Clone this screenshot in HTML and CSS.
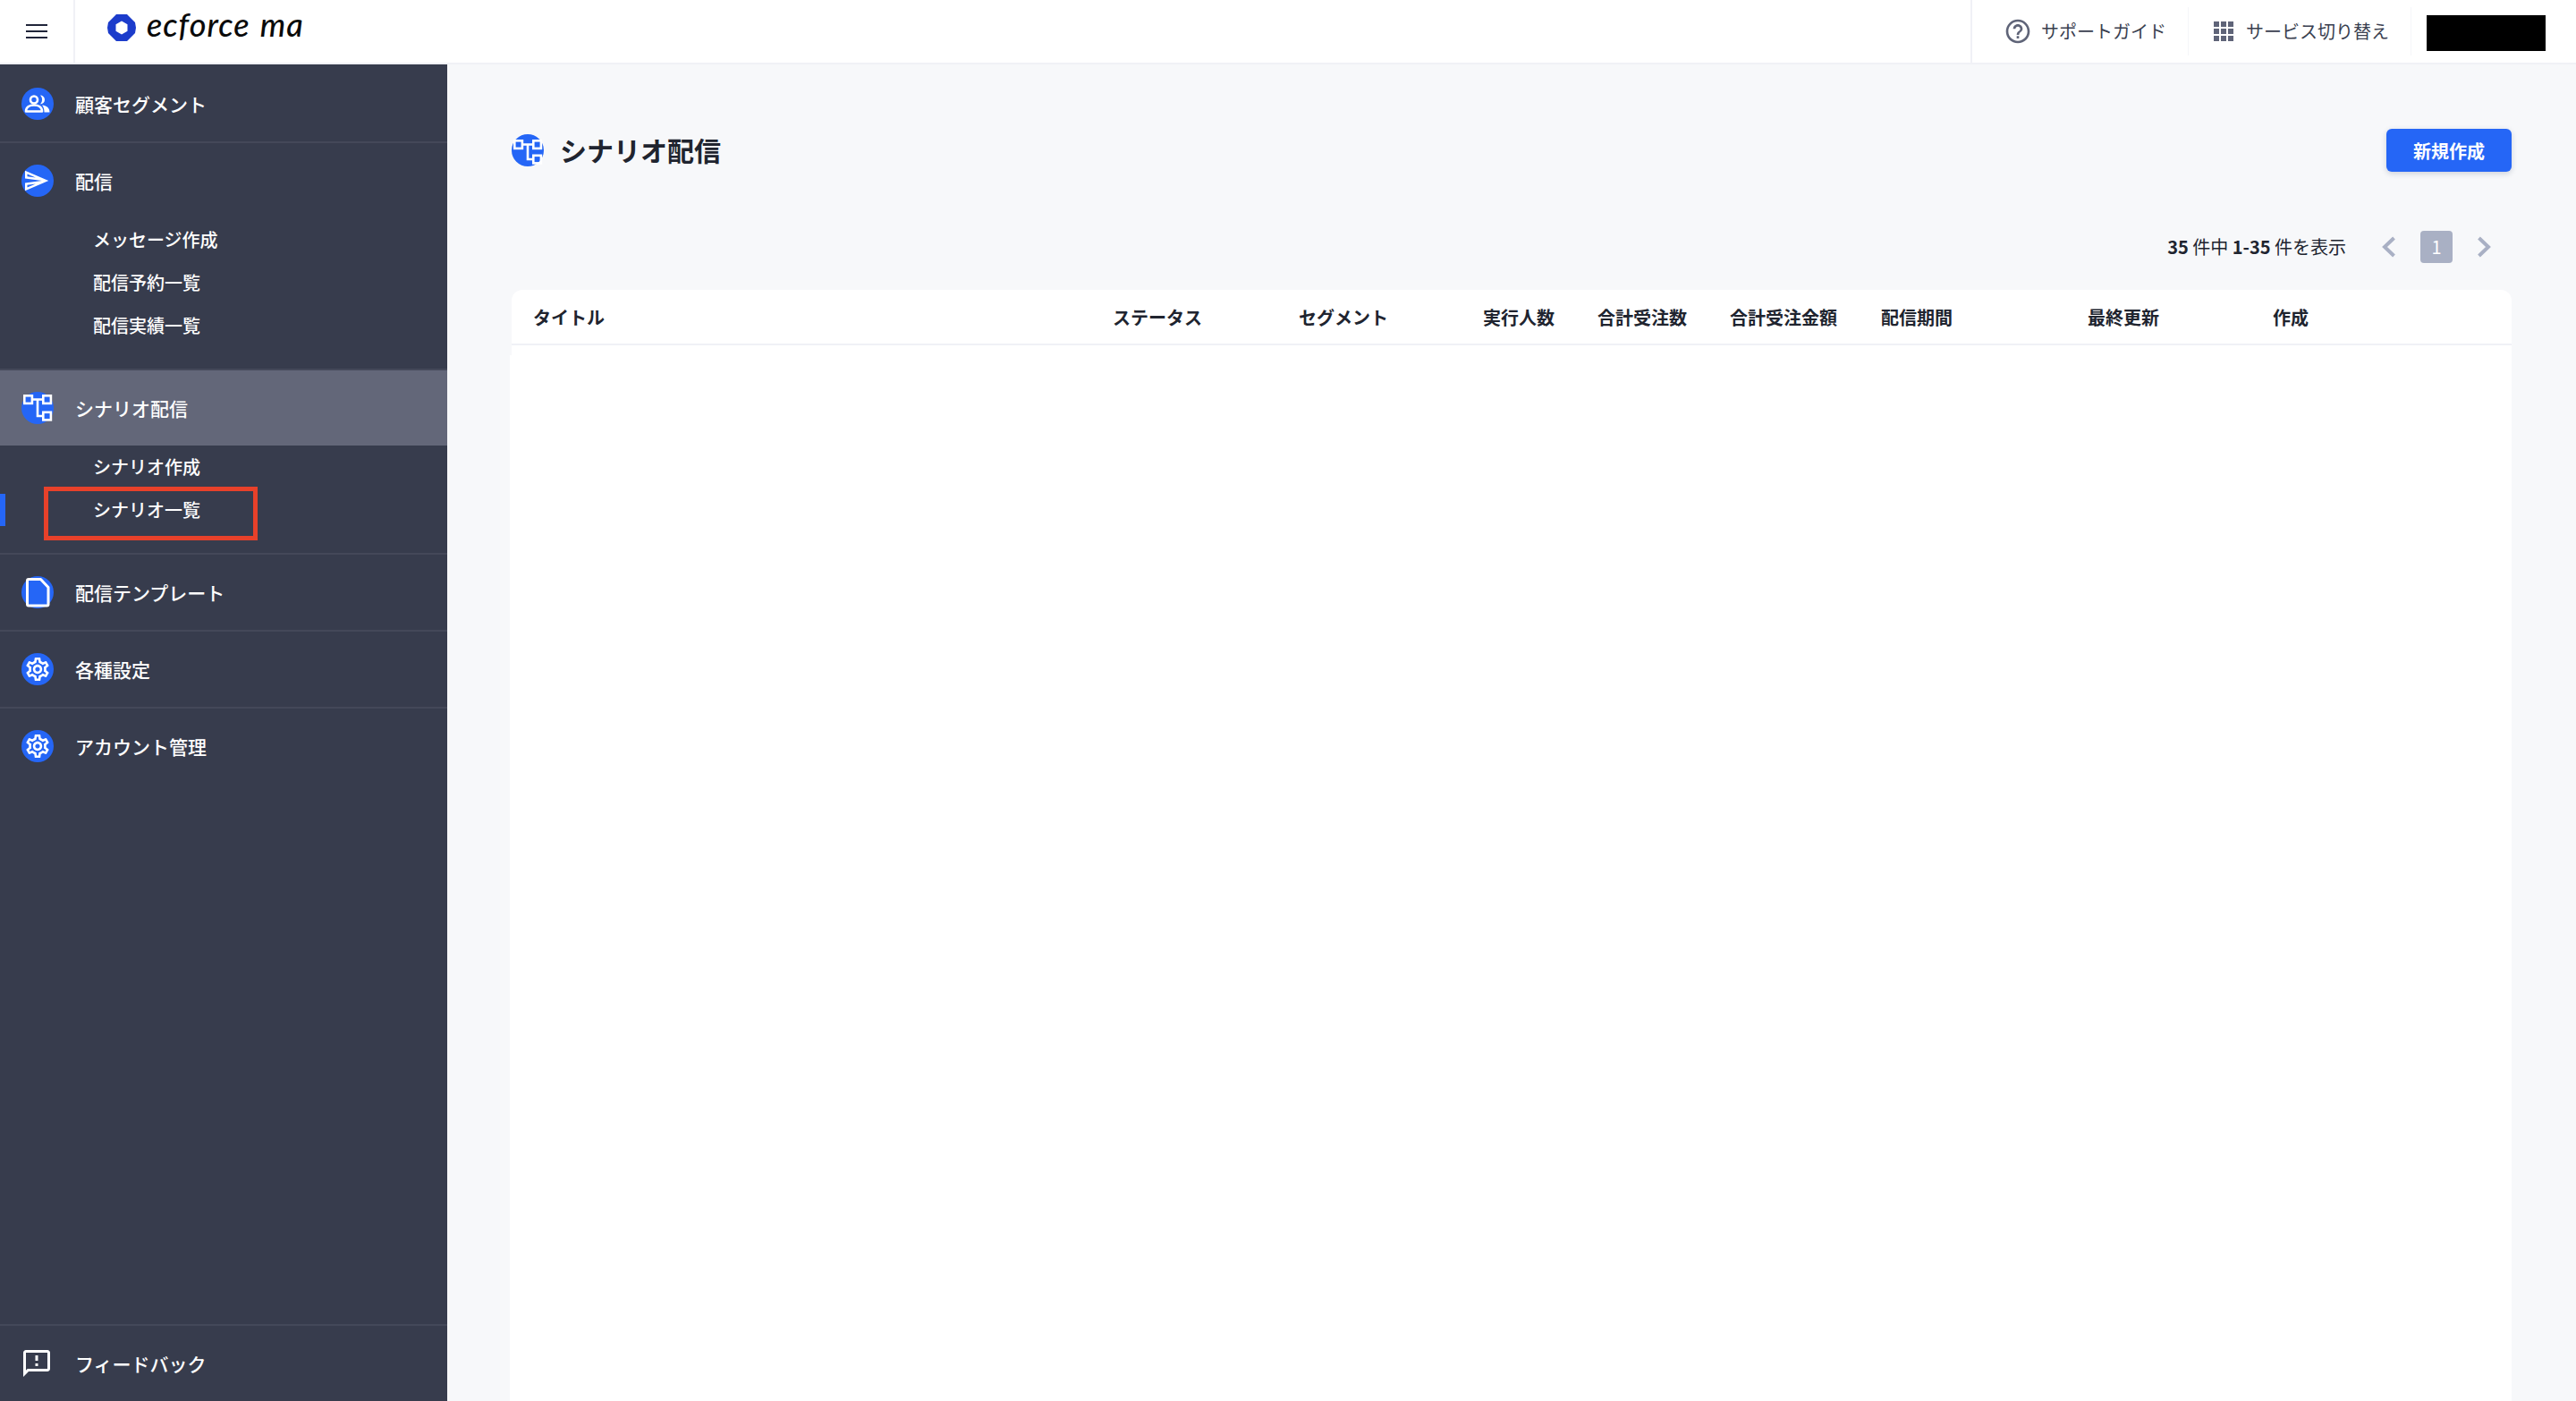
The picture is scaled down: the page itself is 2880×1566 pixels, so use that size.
FILE: index.html
```html
<!DOCTYPE html>
<html lang="ja">
<head>
<meta charset="utf-8">
<title>シナリオ配信</title>
<link rel="stylesheet" href="styles.css">
</head>
<body>
<header class="topbar">
  <div class="burger-cell"><span class="burger"><i></i><i></i><i></i></span></div>
  <div class="logo">
    <svg class="logo-mark" viewBox="0 0 32 32"><path d="M10 1 L22 1 L31 10 L32 16 L31 22 L22 31 L10 31 L1 22 L0 16 L1 10 Z M16 8.500 L9.500 12.200 L9.500 19.800 L16 23.500 L22.500 19.800 L22.500 12.200 Z" fill="#1c3ccb" fill-rule="evenodd"/></svg>
    <span class="logo-text">ecforce ma</span>
  </div>
  <div class="top-actions">
    <div class="top-link guide">
      <svg class="help-icon" viewBox="0 0 24 24"><path fill="#5f6478" d="M11 18h2v-2h-2v2zm1-16C6.480 2 2 6.480 2 12s4.480 10 10 10 10-4.480 10-10S17.520 2 12 2zm0 18c-4.410 0-8-3.590-8-8s3.590-8 8-8 8 3.590 8 8-3.590 8-8 8zm0-14c-2.210 0-4 1.790-4 4h2c0-1.100.9-2 2-2s2 .9 2 2c0 2-3 1.750-3 5h2c0-2.250 3-2.500 3-5 0-2.210-1.790-4-4-4z"/></svg>
      <span>サポートガイド</span>
    </div>
    <div class="top-link switch">
      <svg class="apps-icon" viewBox="0 0 22 22" fill="#5f6478"><rect x="0" y="0" width="6" height="6"/><rect x="8" y="0" width="6" height="6"/><rect x="16" y="0" width="6" height="6"/><rect x="0" y="8" width="6" height="6"/><rect x="8" y="8" width="6" height="6"/><rect x="16" y="8" width="6" height="6"/><rect x="0" y="16" width="6" height="6"/><rect x="8" y="16" width="6" height="6"/><rect x="16" y="16" width="6" height="6"/></svg>
      <span>サービス切り替え</span>
    </div>
    <div class="user-slot"><div class="redacted"></div></div>
  </div>
</header>

<div class="shell">
  <aside class="sidebar">
    <nav class="nav">
      <section class="nav-group first">
        <div class="nav-head">
          <svg class="nav-icon" viewBox="0 0 36 36"><circle cx="18" cy="18" r="18" fill="#2566f6"/><circle cx="14" cy="13.500" r="4" fill="none" stroke="#fff" stroke-width="2.600"/><path d="M21 8.500a5 5 0 0 1 0 10a7 7 0 0 0 0-10z" fill="#fff"/><path d="M5 26.500C5 21.500 9.500 19.500 14 19.500S23 21.500 23 26.500Z" fill="none" stroke="#fff" stroke-width="2.600" stroke-linejoin="round"/><path d="M23 19.500C28 20 31.500 22.500 31.500 27.500H25.500C25.500 24 24.800 21.500 23 19.500Z" fill="#fff"/></svg>
          <span>顧客セグメント</span>
        </div>
      </section>
      <section class="nav-group">
        <div class="nav-head">
          <svg class="nav-icon" viewBox="0 0 36 36"><circle cx="18" cy="18" r="18" fill="#2566f6"/><g transform="translate(1.500 3) scale(1.25)"><path fill="#fff" d="M4.010 6.030l7.510 3.220-7.520-1 .01-2.220zm7.500 8.720L4 17.970v-2.220l7.510-1zM2.010 3L2 10l15 2-15 2 .01 7L23 12 2.010 3z"/></g></svg>
          <span>配信</span>
        </div>
        <ul class="sub-list">
          <li>メッセージ作成</li>
          <li>配信予約一覧</li>
          <li>配信実績一覧</li>
        </ul>
      </section>
      <section class="nav-group">
        <div class="nav-head active">
          <svg class="nav-icon" viewBox="0 0 36 36"><circle cx="18" cy="18" r="18" fill="#2566f6"/><g fill="none" stroke="#fff" stroke-width="2.600"><rect x="3.300" y="4.300" width="8.600" height="8.600"/><rect x="24.300" y="4.300" width="8.600" height="8.600"/><rect x="24.300" y="22.800" width="8.600" height="8.600"/><path d="M12 8.500H24M18 8.500V27H24"/></g></svg>
          <span>シナリオ配信</span>
        </div>
        <ul class="sub-list">
          <li>シナリオ作成</li>
          <li class="current">シナリオ一覧<b class="current-bar"></b><b class="callout"></b></li>
        </ul>
      </section>
      <section class="nav-group">
        <div class="nav-head">
          <svg class="nav-icon" viewBox="0 0 36 36"><circle cx="18" cy="18" r="18" fill="#2566f6"/><path d="M8 3.500H21.500L30 12.500V31.500A1.500 1.500 0 0 1 28.500 33H8A1.500 1.500 0 0 1 6.500 31.500V5A1.500 1.500 0 0 1 8 3.500Z" fill="#2566f6" stroke="#fff" stroke-width="3" stroke-linejoin="round"/></svg>
          <span>配信テンプレート</span>
        </div>
      </section>
      <section class="nav-group">
        <div class="nav-head">
          <svg class="nav-icon" viewBox="0 0 36 36"><circle cx="18" cy="18" r="18" fill="#2566f6"/><g transform="translate(2.400 2.400) scale(1.3)"><path fill="#fff" d="M19.430 12.980c.04-.32.07-.64.07-.98 0-.34-.03-.66-.07-.98l2.110-1.650c.19-.15.24-.42.12-.64l-2-3.460c-.09-.16-.26-.25-.44-.25-.06 0-.12.01-.17.03l-2.490 1c-.52-.4-1.080-.73-1.690-.98l-.38-2.650C14.460 2.180 14.250 2 14 2h-4c-.25 0-.46.18-.49.42l-.38 2.650c-.61.25-1.170.59-1.690.98l-2.490-1c-.06-.02-.12-.03-.18-.03-.17 0-.34.09-.43.25l-2 3.460c-.13.22-.07.49.12.64l2.110 1.650c-.04.32-.07.65-.07.98 0 .33.03.66.07.98l-2.110 1.650c-.19.15-.24.42-.12.64l2 3.460c.09.16.26.25.44.25.06 0 .12-.01.17-.03l2.490-1c.52.4 1.080.73 1.690.98l.38 2.650c.03.24.24.42.49.42h4c.25 0 .46-.18.49-.42l.38-2.650c.61-.25 1.170-.59 1.690-.98l2.490 1c.06.02.12.03.18.03.17 0 .34-.09.43-.25l2-3.460c.12-.22.07-.49-.12-.64l-2.110-1.650zm-1.980-1.710c.04.31.05.52.05.73 0 .21-.02.43-.05.73l-.14 1.130.89.7 1.080.84-.7 1.210-1.270-.51-1.040-.42-.9.68c-.43.32-.84.56-1.250.73l-1.060.43-.16 1.130-.2 1.350h-1.400l-.19-1.350-.16-1.130-1.060-.43c-.43-.18-.83-.41-1.230-.71l-.91-.7-1.060.43-1.270.51-.7-1.210 1.080-.84.89-.7-.14-1.130c-.03-.31-.05-.54-.05-.74s.02-.43.05-.73l.14-1.130-.89-.7-1.080-.84.7-1.210 1.270.51 1.040.42.9-.68c.43-.32.84-.56 1.250-.73l1.060-.43.16-1.130.2-1.350h1.390l.19 1.350.16 1.130 1.060.43c.43.18.83.41 1.230.71l.91.7 1.060-.43 1.270-.51.7 1.210-1.070.85-.89.7.14 1.130zM12 8c-2.210 0-4 1.790-4 4s1.790 4 4 4 4-1.790 4-4-1.790-4-4-4zm0 6c-1.100 0-2-.9-2-2s.9-2 2-2 2 .9 2 2-.9 2-2 2z"/></g></svg>
          <span>各種設定</span>
        </div>
      </section>
      <section class="nav-group">
        <div class="nav-head">
          <svg class="nav-icon" viewBox="0 0 36 36"><circle cx="18" cy="18" r="18" fill="#2566f6"/><g transform="translate(2.400 2.400) scale(1.3)"><path fill="#fff" d="M19.430 12.980c.04-.32.07-.64.07-.98 0-.34-.03-.66-.07-.98l2.110-1.650c.19-.15.24-.42.12-.64l-2-3.460c-.09-.16-.26-.25-.44-.25-.06 0-.12.01-.17.03l-2.490 1c-.52-.4-1.080-.73-1.690-.98l-.38-2.650C14.460 2.180 14.250 2 14 2h-4c-.25 0-.46.18-.49.42l-.38 2.650c-.61.25-1.170.59-1.690.98l-2.490-1c-.06-.02-.12-.03-.18-.03-.17 0-.34.09-.43.25l-2 3.460c-.13.22-.07.49.12.64l2.110 1.650c-.04.32-.07.65-.07.98 0 .33.03.66.07.98l-2.110 1.650c-.19.15-.24.42-.12.64l2 3.460c.09.16.26.25.44.25.06 0 .12-.01.17-.03l2.490-1c.52.4 1.080.73 1.690.98l.38 2.650c.03.24.24.42.49.42h4c.25 0 .46-.18.49-.42l.38-2.650c.61-.25 1.170-.59 1.690-.98l2.490 1c.06.02.12.03.18.03.17 0 .34-.09.43-.25l2-3.460c.12-.22.07-.49-.12-.64l-2.110-1.650zm-1.980-1.710c.04.31.05.52.05.73 0 .21-.02.43-.05.73l-.14 1.130.89.7 1.080.84-.7 1.210-1.270-.51-1.040-.42-.9.68c-.43.32-.84.56-1.250.73l-1.060.43-.16 1.130-.2 1.350h-1.400l-.19-1.350-.16-1.130-1.060-.43c-.43-.18-.83-.41-1.230-.71l-.91-.7-1.060.43-1.270.51-.7-1.210 1.080-.84.89-.7-.14-1.130c-.03-.31-.05-.54-.05-.74s.02-.43.05-.73l.14-1.130-.89-.7-1.080-.84.7-1.210 1.270.51 1.040.42.9-.68c.43-.32.84-.56 1.250-.73l1.060-.43.16-1.130.2-1.350h1.390l.19 1.350.16 1.130 1.060.43c.43.18.83.41 1.230.71l.91.7 1.060-.43 1.270-.51.7 1.210-1.070.85-.89.7.14 1.130zM12 8c-2.210 0-4 1.790-4 4s1.790 4 4 4 4-1.790 4-4-1.790-4-4-4zm0 6c-1.100 0-2-.9-2-2s.9-2 2-2 2 .9 2 2-.9 2-2 2z"/></g></svg>
          <span>アカウント管理</span>
        </div>
      </section>
    </nav>
    <div class="nav-foot">
      <svg class="nav-icon" viewBox="0 0 24 24"><path fill="#fff" d="M20 2H4c-1.100 0-1.990.9-1.990 2L2 22l4-4h14c1.100 0 2-.9 2-2V4c0-1.100-.9-2-2-2zm0 14H5.170L4 17.170V4h16v12zm-9-4h2v2h-2zm0-6h2v4h-2z"/></svg>
      <span>フィードバック</span>
    </div>
  </aside>

  <main class="main">
    <div class="title-row">
      <div class="page-title">
        <svg class="nav-icon" viewBox="0 0 36 36"><circle cx="18" cy="18" r="18" fill="#2566f6"/><g fill="none" stroke="#fff" stroke-width="2.600"><rect x="3.300" y="7.300" width="8.600" height="8.600"/><rect x="24.300" y="7.300" width="8.600" height="8.600"/><rect x="24.300" y="23.800" width="8.600" height="8.600"/><path d="M12 11.500H24M18 11.500V28H24"/></g></svg>
        <h1>シナリオ配信</h1>
      </div>
      <button class="primary">新規作成</button>
    </div>
    <div class="pager">
      <span class="count"><b>35</b> 件中 <b>1-35</b> 件を表示</span>
      <svg class="chev prev" viewBox="0 0 16 24"><path d="M13.500 2L3 12l10.500 10" fill="none" stroke="#a9b0c4" stroke-width="4"/></svg>
      <span class="page-no">1</span>
      <svg class="chev next" viewBox="0 0 16 24"><path d="M2.500 2L13 12 2.500 22" fill="none" stroke="#a9b0c4" stroke-width="4"/></svg>
    </div>
    <div class="table-card">
      <div class="thead">
        <span>タイトル</span>
        <span>ステータス</span>
        <span>セグメント</span>
        <span>実行人数</span>
        <span>合計受注数</span>
        <span>合計受注金額</span>
        <span>配信期間</span>
        <span>最終更新</span>
        <span>作成</span>
      </div>
      <div class="tbody"></div>
    </div>
  </main>
</div>
</body>
</html>
```
FILE: styles.css
```css
* { box-sizing: border-box; }
html, body { height: 100%; }
body {
  margin: 0;
  height: 1566px;
  overflow: hidden;
  display: flex;
  flex-direction: column;
  background: #f7f8fa;
  color: #20242f;
  font-family: "Noto Sans CJK JP", "Noto Sans", sans-serif;
  font-size: 20px;
}

/* top bar */
.topbar {
  flex: 0 0 72px;
  display: flex;
  align-items: stretch;
  background: #fff;
  border-bottom: 2px solid #f0f1f6;
}
.burger-cell {
  flex: 0 0 84px;
  display: flex;
  align-items: center;
  padding-left: 29px;
  border-right: 2px solid #f0f1f6;
}
.burger {
  display: flex;
  flex-direction: column;
  gap: 5px;
  width: 24px;
}
.burger i { display: block; height: 2px; background: #20253a; }
.logo {
  display: flex;
  align-items: center;
  gap: 12px;
  padding: 0 0 8px 36px;
}
.logo-mark { width: 32px; height: 32px; }
.logo-text {
  font-family: Lato, "Noto Sans", sans-serif;
  font-style: italic;
  font-weight: 500;
  font-size: 36px;
  letter-spacing: 1px;
  word-spacing: 2px;
  color: #0a0a0a;
  line-height: 1;
  margin-top: -8px;
}
.top-actions { margin-left: auto; display: flex; align-items: stretch; }
.top-link {
  display: flex;
  align-items: center;
  color: #3a3f50;
  font-size: 20px;
  line-height: 1;
  position: relative;
}
.guide {
  width: 243px;
  padding-left: 35px;
  gap: 10px;
  border-left: 2px solid #f0f1f6;
}
.switch {
  width: 249px;
  padding-left: 29px;
  gap: 14px;
}
.switch::before, .user-slot::before {
  content: "";
  position: absolute;
  left: 0;
  top: 8px;
  bottom: 8px;
  width: 1px;
  background: #f5f6f9;
}
.help-icon { width: 32px; height: 32px; }
.apps-icon { width: 22px; height: 22px; }
.user-slot {
  position: relative;
  width: 185px;
  padding: 17px 34px 0 18px;
}
.redacted { height: 40px; background: #000; }

/* layout */
.shell { flex: 1; display: flex; min-height: 0; }
.sidebar {
  flex: 0 0 500px;
  display: flex;
  flex-direction: column;
  background: #373c4d;
  color: #fff;
}
.nav { flex: 1; display: flex; flex-direction: column; }
.nav-group { border-bottom: 2px solid #444859; }
.nav-group:last-child { border-bottom: 0; }
.nav-group.first { padding-top: 2px; }
.nav-head {
  height: 84px;
  display: flex;
  align-items: center;
  gap: 24px;
  padding-left: 24px;
  font-size: 21px;
  font-weight: 500;
  line-height: 1;
}
.nav-head.active { background: #636779; }
.nav-icon { width: 36px; height: 36px; flex: none; overflow: visible; }
.sub-list {
  list-style: none;
  margin: 0;
  padding: 0 0 24px 104px;
}
.sub-list li {
  position: relative;
  height: 48px;
  display: flex;
  align-items: center;
  font-size: 20px;
  font-weight: 500;
  line-height: 1;
}
.current-bar {
  position: absolute;
  left: -104px;
  top: 6px;
  width: 6px;
  height: 36px;
  background: #2566f6;
}
.callout {
  position: absolute;
  left: -55px;
  top: -2px;
  width: 239px;
  height: 60px;
  border: 5px solid #e8412a;
}
.nav-foot {
  flex: 0 0 86px;
  display: flex;
  align-items: center;
  gap: 25px;
  padding-left: 23px;
  border-top: 2px solid #444859;
  font-size: 21px;
  font-weight: 500;
  line-height: 1;
}

/* content */
.main {
  flex: 1;
  min-width: 0;
  display: flex;
  flex-direction: column;
  padding: 72px 72px 0;
}
.title-row {
  display: flex;
  align-items: center;
  justify-content: space-between;
  height: 48px;
}
.page-title { display: flex; align-items: center; gap: 18px; }
.page-title h1 {
  margin: -2px 0 0;
  font-size: 30px;
  font-weight: 700;
  line-height: 1;
  color: #20242f;
}
.primary {
  width: 140px;
  height: 48px;
  border: 0;
  border-radius: 6px;
  background: #2566f6;
  color: #fff;
  font: inherit;
  font-weight: 700;
  box-shadow: 0 2px 6px rgba(30, 50, 90, .2);
}
.pager {
  display: flex;
  align-items: center;
  justify-content: flex-end;
  height: 36px;
  margin-top: 66px;
  padding-right: 23px;
  font-size: 20px;
  line-height: 1;
}
.count { margin-right: 40px; }
.count b { font-weight: 700; }
.chev { width: 16px; height: 24px; }
.page-no {
  width: 36px;
  height: 36px;
  margin: 0 27px;
  display: flex;
  align-items: center;
  justify-content: center;
  border-radius: 4px;
  background: #a9b0c4;
  color: #fff;
}
.table-card {
  flex: 1;
  margin-top: 30px;
  border-radius: 12px 12px 0 0;
  background: #fff;
}
.thead {
  height: 62px;
  display: grid;
  grid-template-columns: 648px 208px 206px 128px 148px 169px 231px 207px 1fr;
  align-items: center;
  padding: 2px 0 0 24px;
  border-bottom: 2px solid #f0f1f6;
  font-weight: 700;
  line-height: 1;
}
.tbody {
  height: 1200px;
  margin: 11px 0 0 -2px;
  background: #fff;
}
```
